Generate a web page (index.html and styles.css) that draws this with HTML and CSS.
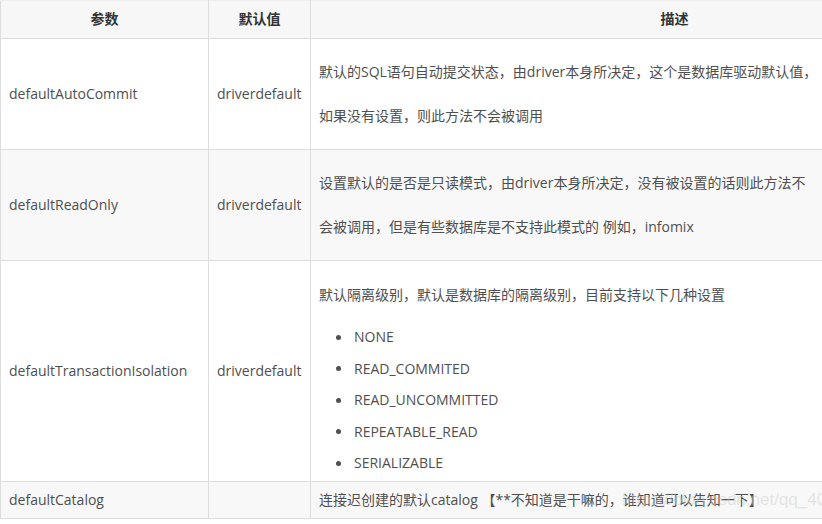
FILE: index.html
```html
<!DOCTYPE html>
<html lang="zh-CN">
<head>
<meta charset="utf-8">
<title>参数表</title>
<link rel="stylesheet" href="styles.css">
</head>
<body>
<div class="page">
  <table class="params">
    <colgroup>
      <col class="c-name">
      <col class="c-def">
      <col class="c-desc">
    </colgroup>
    <thead>
      <tr>
        <th>参数</th>
        <th>默认值</th>
        <th>描述</th>
      </tr>
    </thead>
    <tbody>
      <tr>
        <td>defaultAutoCommit</td>
        <td>driverdefault</td>
        <td class="desc"><p class="tall">默认的SQL语句自动提交状态，由driver本身所决定，这个是数据库驱动默认值，<br>如果没有设置，则此方法不会被调用</p></td>
      </tr>
      <tr class="alt">
        <td>defaultReadOnly</td>
        <td>driverdefault</td>
        <td class="desc"><p class="tall">设置默认的是否是只读模式，由driver本身所决定，没有被设置的话则此方法不<br>会被调用，但是有些数据库是不支持此模式的 例如，infomix</p></td>
      </tr>
      <tr>
        <td>defaultTransactionIsolation</td>
        <td>driverdefault</td>
        <td class="desc top">
          <p class="lead">默认隔离级别，默认是数据库的隔离级别，目前支持以下几种设置</p>
          <ul class="levels">
            <li>NONE</li>
            <li>READ_COMMITED</li>
            <li>READ_UNCOMMITTED</li>
            <li>REPEATABLE_READ</li>
            <li>SERIALIZABLE</li>
          </ul>
        </td>
      </tr>
      <tr class="alt">
        <td>defaultCatalog</td>
        <td></td>
        <td class="desc">连接迟创建的默认catalog 【**不知道是干嘛的，谁知道可以告知一下】</td>
      </tr>
    </tbody>
  </table>
  <div class="watermark">https://blog.csdn.net/qq_40854</div>
</div>
</body>
</html>
```
FILE: styles.css
```css
html, body {
  margin: 0;
  padding: 0;
  background: #ffffff;
  overflow: hidden;
}

.page {
  position: relative;
  width: 822px;
  height: 524px;
  overflow: hidden;
  font-family: "Open Sans", "Noto Sans CJK SC", sans-serif;
  font-size: 14px;
  color: #4f4f4f;
}

.params {
  border-collapse: collapse;
  table-layout: fixed;
  width: 1039px;
}

.c-name { width: 208px; }
.c-def { width: 102px; }

.params th,
.params td {
  border: 1px solid #dddddd;
  padding: 7px 8px 8px;
  line-height: 22px;
  text-align: left;
  vertical-align: middle;
}

.params th {
  background: #f7f7f7;
  color: #333333;
  font-weight: 700;
  text-align: center;
}

.params thead tr th {
  border-top-color: #eeeeee;
}

.params td {
  padding: 7px 8px;
}

.params tr.alt td {
  background: #f8f8f8;
}

.params td.top {
  vertical-align: top;
  padding-top: 8px;
  padding-bottom: 7px;
}

.tall {
  margin: 4px 0;
  line-height: 44px;
  white-space: nowrap;
}

.lead {
  margin: 15px 0 0;
  line-height: 22px;
}

.levels {
  list-style: none;
  margin: 20px 0 0;
  padding: 0 0 0 17px;
}

.levels li {
  display: flex;
  align-items: center;
  line-height: 22px;
  margin-top: 9.5px;
}

.levels li:first-child {
  margin-top: 0;
}

.levels li::before {
  content: "";
  width: 5px;
  height: 5px;
  border-radius: 50%;
  background: #4f4f4f;
  margin-right: 13px;
  flex: none;
}

.watermark {
  position: absolute;
  left: 622px;
  top: 490px;
  font-family: "Liberation Sans", sans-serif;
  font-size: 17px;
  line-height: 20px;
  color: rgba(200, 200, 200, 0.45);
  white-space: nowrap;
  pointer-events: none;
}
```
